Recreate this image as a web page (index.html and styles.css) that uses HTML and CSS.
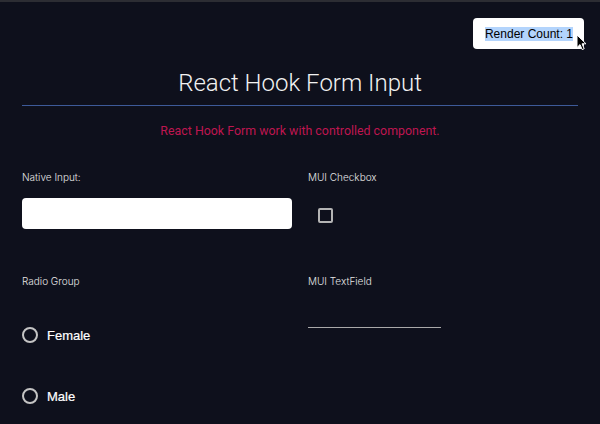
FILE: index.html
```html
<!DOCTYPE html>
<html lang="en">
<head>
<meta charset="utf-8">
<title>React Hook Form Input</title>
<link rel="stylesheet" href="styles.css">
</head>
<body>
<div class="page">
  <header class="header">
    <div class="counter"><span class="selected">Render Count: 1</span></div>
    <svg class="cursor" width="12" height="17" viewBox="0 0 12 17" aria-hidden="true">
      <path d="M1 1 L1 13.5 L4 10.6 L6.2 15.6 L8.2 14.7 L6 9.8 L10 9.8 Z" fill="#000" stroke="#fff" stroke-width="1" stroke-linejoin="round"/>
    </svg>
  </header>
  <h1 class="title">React Hook Form Input</h1>
  <p class="subtitle">React Hook Form work with controlled component.</p>
  <form class="form">
    <div class="field">
      <label class="label">Native Input:</label>
      <div class="native-input"></div>
    </div>
    <div class="field">
      <label class="label">MUI Checkbox</label>
      <div class="checkbox"></div>
    </div>
    <div class="field">
      <label class="label">Radio Group</label>
      <div class="radios">
        <div class="radio-row"><span class="radio"></span><span class="radio-text">Female</span></div>
        <div class="radio-row"><span class="radio"></span><span class="radio-text">Male</span></div>
      </div>
    </div>
    <div class="field">
      <label class="label">MUI TextField</label>
      <div class="textfield"></div>
    </div>
  </form>
</div>
</body>
</html>
```
FILE: styles.css
```css
html, body {
  margin: 0;
  padding: 0;
  background: #0e101c;
}
body {
  border-top: 2px solid #2c2d33;
  height: 422px;
  overflow: hidden;
  font-family: "Roboto", "Liberation Sans", sans-serif;
}
.page {
  position: relative;
}
.header {
  display: flex;
  justify-content: flex-end;
  padding: 16px 16px 0 0;
}
.counter {
  height: 31px;
  background: #fff;
  border-radius: 4px;
  padding: 0 11px 0 12px;
  display: flex;
  align-items: center;
  font-family: "Liberation Sans", Arial, sans-serif;
  font-size: 12px;
  color: #000;
}
.selected {
  background: #b3d4fc;
}
.cursor {
  position: absolute;
  left: 576px;
  top: 32px;
}
.title {
  margin: 20px 22px 0;
  padding-bottom: 8px;
  border-bottom: 1px solid #3d5a99;
  text-align: center;
  font-family: "Roboto", sans-serif;
  font-weight: 300;
  font-size: 24px;
  line-height: 28px;
  color: #f2f2f2;
}
.subtitle {
  margin: 17px 0 0;
  text-align: center;
  font-family: "Roboto", sans-serif;
  font-size: 12.4px;
  line-height: 15px;
  color: #bf1650;
}
.form {
  display: grid;
  grid-template-columns: 270px 1fr;
  column-gap: 16px;
  row-gap: 46px;
  margin: 33px 22px 0;
}
.field {
  display: flex;
  flex-direction: column;
  align-items: flex-start;
}
.label {
  font-family: "Inter", sans-serif;
  font-weight: 300;
  font-size: 10px;
  line-height: 12px;
  color: #e6e6e6;
}
.native-input {
  margin-top: 15px;
  width: 270px;
  height: 31px;
  background: #fff;
  border-radius: 4px;
}
.checkbox {
  margin: 25px 0 0 10px;
  width: 11px;
  height: 11px;
  border: 2px solid #b4b4b4;
  border-radius: 2px;
}
.radios {
  margin-top: 40px;
  display: flex;
  flex-direction: column;
  gap: 45px;
}
.radio-row {
  display: flex;
  align-items: center;
  gap: 9px;
}
.radio {
  box-sizing: border-box;
  width: 16px;
  height: 16px;
  border: 2px solid #c4c4c4;
  border-radius: 50%;
}
.radio-text {
  font-family: "Liberation Sans", Arial, sans-serif;
  font-size: 13px;
  line-height: 15px;
  color: #fff;
  -webkit-text-stroke: 0.2px #fff;
}
.textfield {
  width: 133px;
  height: 40px;
  border-bottom: 1px solid #a9a9a9;
}
```
